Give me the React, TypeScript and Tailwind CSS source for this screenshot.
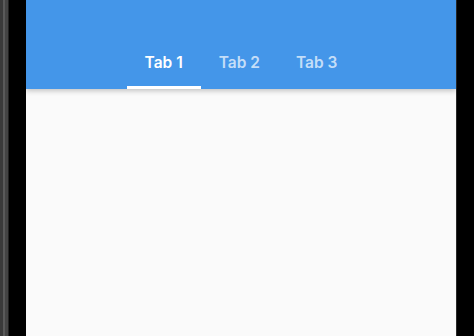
import { useState } from 'react'

const tabs = ['Tab 1', 'Tab 2', 'Tab 3']

export default function App() {
  const [active, setActive] = useState(0)

  return (
    <div className="flex h-[336px] w-[474px] overflow-hidden bg-black font-['Inter',sans-serif]">
      <div className="flex h-full w-[26px] shrink-0">
        <div className="w-[3px] bg-[#3a3a3a]" />
        <div className="w-[2px] bg-[#5a5a5a]" />
        <div className="w-[3px] bg-[#444444]" />
        <div className="w-[1px] bg-[#222222]" />
        <div className="flex-1 bg-black" />
      </div>

      <main className="flex w-[430px] shrink-0 flex-col bg-[#fafafa]">
        <header className="relative z-10 flex h-[89px] items-end justify-center bg-[#4496e9] shadow-[0_2px_5px_rgba(0,0,0,0.22)]">
          <nav className="flex">
            {tabs.map((t, i) => (
              <button
                key={t}
                type="button"
                onClick={() => setActive(i)}
                className={`relative flex h-[46px] items-start justify-center px-[18px] pt-[11px] text-[15.5px] font-semibold leading-[18px] ${
                  active === i ? 'text-white' : 'text-white/70'
                }`}
              >
                {t}
                {active === i && (
                  <span className="absolute inset-x-0 bottom-0 h-[3px] bg-white" />
                )}
              </button>
            ))}
          </nav>
        </header>
        <div className="flex-1" />
      </main>

      <div className="h-full w-[1px] bg-[#2a2a2a]" />
      <div className="flex-1 bg-black" />
    </div>
  )
}
